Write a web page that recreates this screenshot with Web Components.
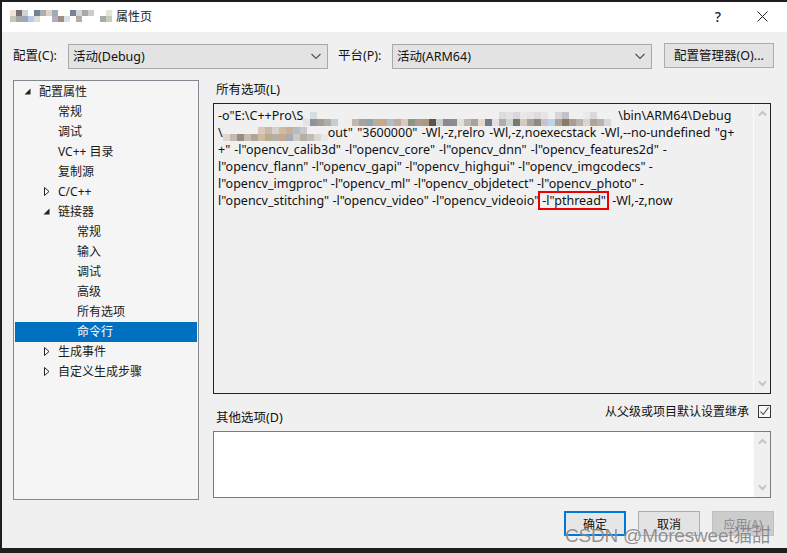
<!DOCTYPE html>
<html lang="zh"><head><meta charset="utf-8"><title>属性页</title>
<style>
html,body{margin:0;padding:0;width:787px;height:553px;overflow:hidden;background:#1e1e1e;font:12px "Noto Sans","Noto Sans CJK SC",sans-serif;color:#000}
x-textbox>div{height:17px}
</style></head><body>
<x-dialog>
  <x-titlebar slot="title">
    <x-mosaic size="6" cols="14" colors="#f0e2d8 #7a6f6c #ccd4d8 #fff #6f8292 #a9adb3 #dcd3ca #a3a9b5 #fff #fff #7c8295 #d0d6dc #aea8a2 #c9ccd4 #c8c4bc #a6a6a8 #9fa7b3 #b4cdea #dfded6 #fff #fff #b0aeb8 #9a8f86 #d5e2ec #fff #b5aea6 #fff #fff"></x-mosaic>
    <x-mosaic size="6" cols="2" colors="#fff #e2e6da #a8aaa6 #c4cebc" style="margin-left:6px"></x-mosaic>
    <span class="t">属性页</span>
  </x-titlebar>
  <x-configrow slot="config">
    <span style="width:55px">配置(C):</span>
    <x-select style="width:260px">活动(Debug)</x-select>
    <span style="width:54px;margin-left:10px">平台(P):</span>
    <x-select style="width:260px">活动(ARM64)</x-select>
    <x-button style="width:110px;margin-left:12px;margin-top:-1px;font-size:12.5px">配置管理器(O)...</x-button>
  </x-configrow>
  <x-tree slot="tree">
    <x-node indent="0" arrow="open">配置属性</x-node>
    <x-node indent="1">常规</x-node>
    <x-node indent="1">调试</x-node>
    <x-node indent="1">VC++ 目录</x-node>
    <x-node indent="1">复制源</x-node>
    <x-node indent="1" arrow="closed">C/C++</x-node>
    <x-node indent="1" arrow="open">链接器</x-node>
    <x-node indent="2">常规</x-node>
    <x-node indent="2">输入</x-node>
    <x-node indent="2">调试</x-node>
    <x-node indent="2">高级</x-node>
    <x-node indent="2">所有选项</x-node>
    <x-node indent="2" selected>命令行</x-node>
    <x-node indent="1" arrow="closed">生成事件</x-node>
    <x-node indent="1" arrow="closed">自定义生成步骤</x-node>
  </x-tree>
  <x-panel slot="panel">
    <x-label style="height:22px">所有选项(L)</x-label>
    <x-textbox dark style="height:291px">
      <div>-o"E:\C++Pro\S<x-mosaic size="7" cols="45" lift colors="
      t #d4dce4 t t t t t t t t t t t t t t t t t t t t t t t t t t #dcdcdc #e4e2e2 #d8d8dc #e8e8e8 #e4e4e4 #dcdcdc #e8e4e4 t #d8d4d8 #c4c0c8 t t #e8ece8 #dcd8d8 t t t
      #e4e4e4 #8d949c #a49c94 #b0aca8 #c8ccd0 #f0f0f0 #f4ece2 #c0b8ac #a8a29a #94a2ac #b8ae9c #c8a888 #a8c0d0 #c4a898 #dcc8c0 #8c9484 #a89c94 #ac9880 #5c524c #c8d0cc #8a8890 #8e8a94 #e4e0d4 #bcb8ac #a0a4a8 #e8d8c4 #747c8c #e4e0e0 #b4a8b4 #cad6d0 #7a7872 #d4cab8 #a8a49c #8e8a80 #c4c4cc #bcd4ea #aca49a #8c7a62 #a89c94 #bcb4ac #d8d4d0 #b0a494 #bcb0ac #d8d8d8 #f0f0f0"></x-mosaic>\bin\ARM64\Debug</div>
      <div style="word-spacing:1.1px">\<x-mosaic size="7" cols="15" colors="
      t t t t t #dcc8b8 #c8b8a8 #d8d0c8 #ccbca0 #c8b098 #b4bcc8 #c8c8cc t t t
      #e0d8d0 #c4b8ac #9a8c80 #c4bcb0 #b4a498 #ccbca4 #b8ac90 #b4b0a8 #c8aa88 #a4acb8 #ccc8c4 #b4b0a8 #c0bcb8 #d8d8d4 #e8e8e8"></x-mosaic>out" "3600000" -Wl,-z,relro -Wl,-z,noexecstack -Wl,--no-undefined "g+</div>
      <div style="word-spacing:.8px">+" -l"opencv_calib3d" -l"opencv_core" -l"opencv_dnn" -l"opencv_features2d" -</div>
      <div>l"opencv_flann" -l"opencv_gapi" -l"opencv_highgui" -l"opencv_imgcodecs" -</div>
      <div>l"opencv_imgproc" -l"opencv_ml" -l"opencv_objdetect" -l"opencv_photo" -</div>
      <div>l"opencv_stitching" -l"opencv_video" -l"opencv_videoio"<x-mark>-l"pthread"</x-mark> -Wl,-z,now</div>
    </x-textbox>
    <x-inherit-row style="height:37px">
      <x-label>其他选项(D)</x-label>
      <x-check>从父级或项目默认设置继承</x-check>
    </x-inherit-row>
    <x-textbox style="height:67px" white></x-textbox>
  </x-panel>
  <x-footer slot="footer">
    <x-button primary>确定</x-button>
    <x-button>取消</x-button>
    <x-button disabled>应用(A)</x-button>
  </x-footer>
  <x-watermark slot="overlay">CSDN @Moresweet猫甜</x-watermark>
</x-dialog>
<script>
function def(name,html,init){
  customElements.define(name,class extends HTMLElement{
    connectedCallback(){
      if(this.shadowRoot)return;
      const r=this.attachShadow({mode:'open'});
      r.innerHTML=html;
      if(init)init.call(this,r);
    }
  });
}
const chev=(d)=>`<svg width="9" height="7" viewBox="0 0 9 7"><path d="${d==='up'?'M1 5.5 4.5 2 8 5.5':'M1 1.5 4.5 5 8 1.5'}" fill="none" stroke="#c4c4c4" stroke-width="2"/></svg>`;
def('x-dialog',`<style>
:host{display:grid;grid-template-columns:186px 558px;grid-template-rows:30px 12px 25px auto auto;align-content:start;column-gap:14px;box-sizing:border-box;position:relative;margin:2px 0 0 2px;width:785px;height:546px;background:#f0f0f0;padding:0 0 0 11px}
.bar{grid-column:1/-1;margin-left:-11px;margin-right:-16px}
</style>
<div class="bar"><slot name="title"></slot></div>
<div style="grid-column:1/-1"></div>
<div style="grid-column:1/-1"><slot name="config"></slot></div>
<div style="margin-top:11px"><slot name="tree"></slot></div>
<div style="margin-top:12px"><slot name="panel"></slot></div>
<div style="grid-column:1/-1"><slot name="footer"></slot></div>
<slot name="overlay"></slot>`);
def('x-titlebar',`<style>
:host{display:flex;align-items:center;height:30px;background:#fff;padding-left:8px;font-size:12px;color:#222}
::slotted(.t){margin:0 0 2px 4px}
.r{margin-left:auto;display:flex;align-items:center;padding-bottom:2px}
.q{font-size:14px;font-weight:500;color:#222;margin-right:36px}
</style><slot></slot><div class="r"><span class="q">?</span>
<svg width="11" height="11" viewBox="0 0 11 11" style="margin-right:19px"><path d="M.5.5 10.5 10.5M10.5.5.5 10.5" stroke="#222" fill="none"/></svg></div>`);
def('x-mosaic',`<style>:host{display:inline-block;vertical-align:middle;line-height:0;height:14px;margin:-3px 0}
:host([lift]){vertical-align:1px}
.g{display:grid}i{display:block}</style><div class="g"></div>`,function(r){
  const s=+this.getAttribute('size'),c=+this.getAttribute('cols');
  const cols=this.getAttribute('colors').trim().split(/\s+/);
  const g=r.querySelector('.g');
  g.style.gridTemplateColumns=`repeat(${c},${s}px)`;
  g.style.gridAutoRows=s+'px';
  cols.forEach(x=>{const i=document.createElement('i');if(x!=='t')i.style.background=x;g.append(i)});
});
def('x-configrow',`<style>:host{display:flex;align-items:flex-start;height:25px;font-size:12.5px;line-height:23px;color:#111;white-space:nowrap;margin-right:-3px}
::slotted(*){flex:none}</style><slot></slot>`);
def('x-select',`<style>:host{display:flex;align-items:center;box-sizing:border-box;height:25px;background:#e3e3e3;border:1px solid #a9a9a9;padding:0 4px;font-size:12.5px;color:#111}
svg{margin-left:auto;margin-right:1px}</style><slot></slot><svg width="12" height="7" viewBox="0 0 12 7"><path d="M1.5 1 6 5.5 10.5 1" fill="none" stroke="#555" stroke-width="1.2"/></svg>`);
def('x-button',`<style>:host{display:flex;align-items:center;justify-content:center;box-sizing:border-box;height:25px;width:62px;background:#e3e3e3;border:1px solid #adadad;font-size:12px;color:#111;white-space:nowrap}
:host([primary]){border:2px solid #0078d7;background:#e6e6e6}
:host([disabled]){background:#ccc;color:#8a8a8a;border-color:#bfbfbf}</style><slot></slot>`);
def('x-tree',`<style>:host{display:block;box-sizing:border-box;height:420px;background:#f5f5f5;border:1px solid #828790;padding:1px;font-size:12px;color:#1a1a1a}</style><slot></slot>`);
def('x-node',`<style>:host{display:flex;align-items:center;box-sizing:border-box;height:20px;padding-bottom:2px;white-space:nowrap}
:host([selected]){background:#0070c0;color:#fff}
.a{width:15px;display:flex;flex:none;align-items:center}
svg{display:block}</style><span class="sp"></span><span class="a"></span><slot></slot>`,function(r){
  const n=+this.getAttribute('indent');
  r.querySelector('.sp').style.cssText=`width:${9+n*19}px;flex:none`;
  const a=this.getAttribute('arrow'),b=r.querySelector('.a');
  if(a==='open')b.innerHTML='<svg width="7" height="7" viewBox="0 0 7 7"><path d="M6.5 .5V6.5H.5Z" fill="#222"/></svg>';
  if(a==='closed')b.innerHTML='<svg width="6" height="9" viewBox="0 0 6 9" style="margin-left:1px"><path d="M.5.5 5 4.5.5 8.5Z" fill="#fff" stroke="#222"/></svg>';
});
def('x-panel',`<style>:host{display:block}</style><slot></slot>`);
def('x-label',`<style>:host{display:block;padding-left:3px;font-size:12.5px;color:#111;line-height:18px;white-space:nowrap}</style><slot></slot>`);
def('x-inherit-row',`<style>:host{display:flex;align-items:flex-end;justify-content:space-between;box-sizing:border-box;padding-bottom:4px}</style><slot></slot>`);
def('x-check',`<style>:host{display:flex;align-items:center;gap:9px;font-size:12px;color:#111;position:relative;top:-7px;white-space:nowrap}
.b{box-sizing:border-box;width:13px;height:13px;border:1px solid #333;background:#f7f7f7;display:block}</style><slot></slot>
<svg class="b" viewBox="0 0 11 11"><path d="M1.5 5.5 4.2 8.5 9.5 1.5" fill="none" stroke="#444" stroke-width="1.1"/></svg>`);
def('x-textbox',`<style>:host{display:flex;box-sizing:border-box;border:1px solid #7a7a7a;background:#f0f0f0;font-size:12.5px;color:#111;line-height:17px;white-space:nowrap}
:host([dark]){border-color:#222}
:host([white]){background:#fff}
.c{flex:1;padding:3px 0 0 4px;overflow:hidden}
.s{width:17px;background:#f0f0f0;display:flex;flex-direction:column;justify-content:space-between;align-items:center;padding:6px 0;border-left:1px solid #fafafa;box-sizing:border-box}</style>
<div class="c"><slot></slot></div><div class="s">${chev('up')}${chev('down')}</div>`);
def('x-mark',`<style>:host{display:inline-block;outline:2px solid #ee0000;line-height:15px;padding:0 1px 0 2px;margin:0 2px 0 1px}</style><slot></slot>`);
def('x-footer',`<style>:host{display:flex;justify-content:flex-end;gap:12px;padding:11px 0 0;margin-right:-3px}</style><slot></slot>`);
def('x-watermark',`<style>:host{position:absolute;left:563px;top:518px;font:19px "Liberation Sans","Noto Sans CJK SC",sans-serif;letter-spacing:-.2px;color:rgba(70,70,70,.6);text-shadow:0 0 1px rgba(255,255,255,.8);white-space:nowrap}</style><slot></slot>`);
</script>
</body></html>
